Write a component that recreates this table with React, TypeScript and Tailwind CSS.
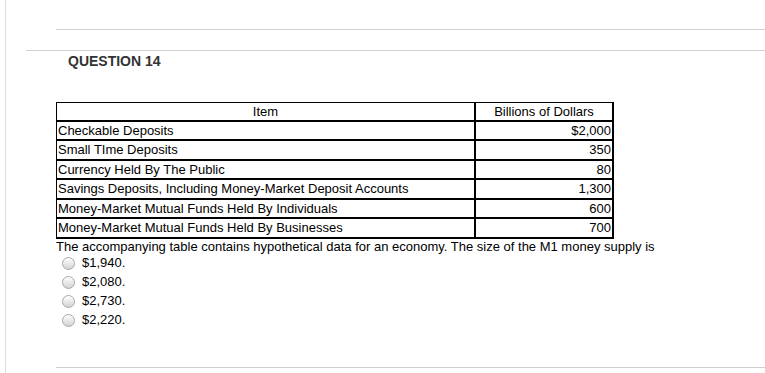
import React from "react";

const rows: [string, string][] = [
  ["Checkable Deposits", "$2,000"],
  ["Small TIme Deposits", "350"],
  ["Currency Held By The Public", "80"],
  ["Savings Deposits, Including Money-Market Deposit Accounts", "1,300"],
  ["Money-Market Mutual Funds Held By Individuals", "600"],
  ["Money-Market Mutual Funds Held By Businesses", "700"],
];

const options = ["$1,940.", "$2,080.", "$2,730.", "$2,220."];

export default function App() {
  return (
    <div className="w-[765px] h-[373px] bg-white overflow-hidden font-['Liberation_Sans',Arial,sans-serif] text-black">
      <div className="ml-[5px] h-full border-l border-[#dedede] pt-[29px] flex flex-col">
        <div className="ml-[50px] border-t border-[#cfcfcf]" />
        <div className="mt-[20px] ml-[20px] border-t border-[#cfcfcf]" />
        <div className="ml-[50px] flex flex-col">
          <h2 className="ml-[12px] mt-[2px] text-[14px] leading-[17px] font-bold text-[#333]">
            QUESTION 14
          </h2>
          <div className="mt-[32px] w-[558px] border-t border-l border-r-2 border-black text-[13px] leading-[17.5px]">
            <div className="flex border-b-2 border-black h-[18.5px] leading-[17px]">
              <div className="w-[419px] border-r-2 border-black text-center">Item</div>
              <div className="flex-1 text-center">Billions of Dollars</div>
            </div>
            {rows.map(([item, val]) => (
              <div key={item} className="flex border-b-2 border-black h-[19.5px]">
                <div className="w-[419px] border-r-2 border-black pl-[1px] whitespace-nowrap">{item}</div>
                <div className="flex-1 text-right pr-[1px]">{val}</div>
              </div>
            ))}
          </div>
          <p className="text-[13px] leading-[15px] whitespace-nowrap">
            The accompanying table contains hypothetical data for an economy. The size of the M1 money supply is
          </p>
          <div className="flex flex-col">
            {options.map((o) => (
              <label key={o} className="flex items-center h-[19px] pl-[6px] text-[13px]">
                <span className="w-[13px] h-[13px] rounded-full border border-[#a8a8a8] bg-gradient-to-b from-[#ffffff] to-[#d3d3d3]" />
                <span className="ml-[7px]">{o}</span>
              </label>
            ))}
          </div>
        </div>
        <div className="mt-[37px] ml-[50px] border-t border-[#cfcfcf]" />
      </div>
    </div>
  );
}
